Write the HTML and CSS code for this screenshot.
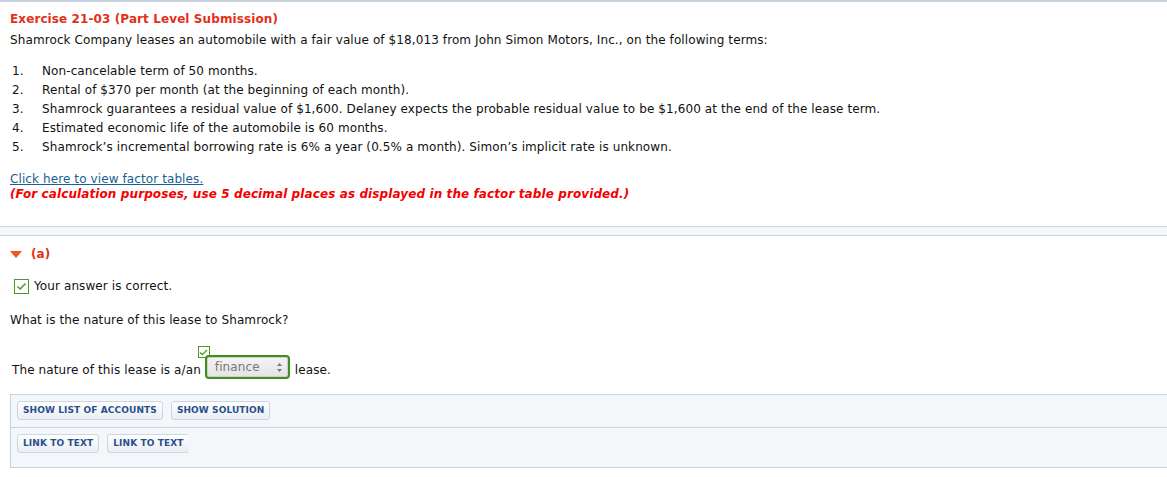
FILE: index.html
```html
<!DOCTYPE html>
<html>
<head>
  <title>Exercise 21-03</title>
  <link rel="stylesheet" href="styles.css">
</head>
<body>
  <div class="question">
    <h1 class="title">Exercise 21-03 (Part Level Submission)</h1>
    <p class="intro">Shamrock Company leases an automobile with a fair value of $18,013 from John Simon Motors, Inc., on the following terms:</p>
    <ol class="terms">
      <li><span class="num">1.</span>Non-cancelable term of 50 months.</li>
      <li><span class="num">2.</span>Rental of $370 per month (at the beginning of each month).</li>
      <li><span class="num">3.</span>Shamrock guarantees a residual value of $1,600. Delaney expects the probable residual value to be $1,600 at the end of the lease term.</li>
      <li><span class="num">4.</span>Estimated economic life of the automobile is 60 months.</li>
      <li><span class="num">5.</span>Shamrock’s incremental borrowing rate is 6% a year (0.5% a month). Simon’s implicit rate is unknown.</li>
    </ol>
    <a class="factor-link" href="#">Click here to view factor tables.</a>
    <p class="note">(For calculation purposes, use 5 decimal places as displayed in the factor table provided.)</p>
  </div>

  <div class="divider"></div>

  <div class="part">
    <div class="part-head"><span class="arrow"></span>(a)</div>
    <div class="status">
      <span class="check-box">
        <svg width="11" height="9" viewBox="0 0 11 9"><path d="M1.5 4.5 L4.2 7 L9.5 1.5" fill="none" stroke="#4a9a2a" stroke-width="1.6"/></svg>
      </span>
      Your answer is correct.
    </div>
    <p class="ask">What is the nature of this lease to Shamrock?</p>
    <div class="answer-line">
      <span>The nature of this lease is a/an</span>
      <span class="select-wrap">
        <span class="mini-check">
          <svg width="9" height="7" viewBox="0 0 9 7"><path d="M1 3.5 L3.3 5.6 L8 1" fill="none" stroke="#4a9a2a" stroke-width="1.3"/></svg>
        </span>
        <span class="select">finance<span class="spin">
          <svg width="7" height="11" viewBox="0 0 7 11"><path d="M3.5 1 L6 4 H1 Z M3.5 10 L6 7 H1 Z" fill="#777"/></svg>
        </span></span>
      </span>
      <span>lease.</span>
    </div>
  </div>

  <div class="tools">
    <div class="tool-row">
      <span class="btn">SHOW LIST OF ACCOUNTS</span>
      <span class="btn">SHOW SOLUTION</span>
    </div>
    <div class="tool-row last">
      <span class="btn">LINK TO TEXT</span>
      <span class="btn open">LINK TO TEXT</span>
    </div>
  </div>
</body>
</html>
```

FILE: styles.css
```css
body {
  margin: 0;
  padding: 0;
  font-family: "DejaVu Sans", Verdana, sans-serif;
  font-size: 12px;
  letter-spacing: 0.1px;
  color: #111;
  background: #fff;
}

.question {
  border-top: 2px solid #c9d3de;
  padding: 8px 10px 0 10px;
}

.title {
  margin: 0;
  font-size: 12px;
  font-weight: bold;
  color: #e2301a;
  line-height: 18px;
}

.intro {
  margin: 3px 0 0 0;
  line-height: 18px;
}

.terms {
  list-style: none;
  margin: 13px 0 0 0;
  padding: 0;
}

.terms li {
  line-height: 19px;
  display: flex;
}

.terms .num {
  width: 30px;
  padding-left: 2px;
  flex: none;
}

.factor-link {
  display: inline-block;
  margin-top: 15px;
  color: #1a5e94;
  line-height: 15px;
}

.note {
  margin: 0;
  color: #f40000;
  font-weight: bold;
  font-style: italic;
  line-height: 15px;
}

.divider {
  margin-top: 24px;
  height: 8px;
  background: #f3f7fa;
  border-top: 1px solid #c9d3de;
  border-bottom: 1px solid #c9d3de;
}

.part {
  padding: 9px 10px 0 10px;
}

.part-head {
  display: flex;
  align-items: center;
  color: #e2301a;
  font-weight: bold;
  line-height: 18px;
}

.arrow {
  width: 0;
  height: 0;
  border-left: 6px solid transparent;
  border-right: 6px solid transparent;
  border-top: 7px solid #f0561d;
  margin-right: 9px;
}

.status {
  display: flex;
  align-items: center;
  margin-top: 14px;
  padding-left: 4px;
  line-height: 18px;
}

.check-box {
  width: 13px;
  height: 13px;
  border: 1px solid #4a9a2a;
  display: flex;
  align-items: center;
  justify-content: center;
  margin-right: 5px;
}

.ask {
  margin: 16px 0 0 0;
  line-height: 18px;
}

.answer-line {
  margin-top: 24px;
  padding-left: 2px;
  display: flex;
  align-items: flex-end;
  line-height: 18px;
}

.select-wrap {
  position: relative;
  margin: 0 5px 0 4px;
}

.mini-check {
  position: absolute;
  left: -7px;
  top: -7px;
  width: 10px;
  height: 10px;
  background: #fff;
  border: 1px solid #4a9a2a;
  display: flex;
  align-items: center;
  justify-content: center;
}

.select {
  display: flex;
  align-items: center;
  justify-content: space-between;
  width: 68px;
  height: 20px;
  padding: 0 5px 0 8px;
  border: 2px solid #3f8f1f;
  border-radius: 4px;
  background: linear-gradient(#f4f4f4, #e4e4e4);
  box-shadow: inset 0 0 0 1px #cfcfcf;
  color: #777;
  position: relative;
  top: 2px;
  margin-bottom: 2px;
}

.select .spin {
  display: flex;
}

.tools {
  margin: 15px 0 0 10px;
  background: #f4f7fa;
  border: 1px solid #c9d3de;
  border-right: none;
}

.tool-row {
  display: flex;
  gap: 8px;
  padding: 6px 6px 7px 6px;
  border-bottom: 1px solid #c9d3de;
}

.tool-row.last {
  border-bottom: none;
  padding-bottom: 14px;
}

.btn {
  display: inline-block;
  font-size: 9px;
  font-weight: bold;
  letter-spacing: 0.1px;
  color: #2a4f8a;
  line-height: 17px;
  padding: 0 5px;
  border: 1px solid #cdd6e0;
  border-radius: 3px;
  background: linear-gradient(#ffffff, #e9eef4);
}

.btn.open {
  border-right-color: transparent;
}
```
